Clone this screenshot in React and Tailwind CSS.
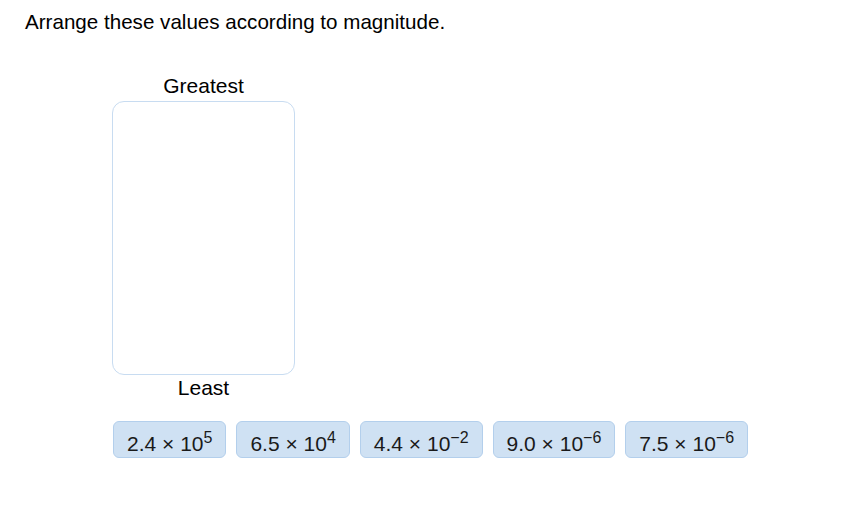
const values = [
  { base: '2.4', exp: '5' },
  { base: '6.5', exp: '4' },
  { base: '4.4', exp: '−2' },
  { base: '9.0', exp: '−6' },
  { base: '7.5', exp: '−6' },
];

function Chip({ base, exp }) {
  return (
    <div className="h-[37px] px-[13px] flex items-center rounded-md bg-[#cfe1f3] border border-[#b3cfec] text-[21px] text-[#1a1a1a]">
      <span className="leading-none pt-[7px]">
        {base} × 10<sup className="text-[16px]">{exp}</sup>
      </span>
    </div>
  );
}

export default function App() {
  return (
    <div className="w-[844px] h-[522px] bg-white text-black" style={{ fontFamily: '"Liberation Sans", Arial, sans-serif' }}>
      <div className="pl-[25px] pt-[9px] text-[20.6px] leading-[26px]">
        Arrange these values according to magnitude.
      </div>
      <div className="pl-[112px] pt-[38px] flex flex-col">
        <div className="w-[183px] text-center text-[21px] leading-[26px]">Greatest</div>
        <div className="w-[183px] h-[274px] mt-[2px] rounded-xl border border-[#c8dcf1] bg-white" />
        <div className="w-[183px] text-center text-[21px] leading-[26px]">Least</div>
        <div className="flex gap-[10px] mt-[20px] pl-[1px]">
          {values.map((v, i) => (
            <Chip key={i} base={v.base} exp={v.exp} />
          ))}
        </div>
      </div>
    </div>
  );
}
